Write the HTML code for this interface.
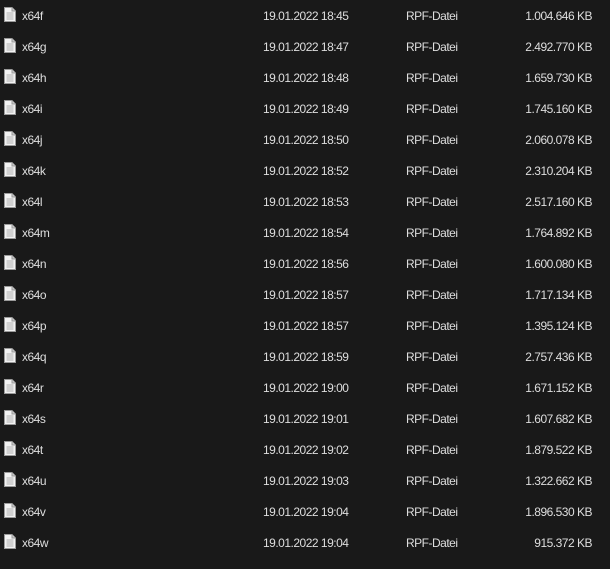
<!DOCTYPE html>
<html><head><meta charset="utf-8"><style>
body{margin:0;background:#191919;width:610px;height:569px;overflow:hidden;font-family:"Liberation Sans",sans-serif;font-size:12px;color:#dedede;letter-spacing:-0.5px}
.r{position:absolute;left:0;width:610px;height:31px}
.r svg{position:absolute;left:4px;top:7px}
.n{position:absolute;left:22px;top:9px}
.d{position:absolute;left:263px;top:9px}
.t{position:absolute;left:406px;top:9px}
.s{position:absolute;right:18px;top:9px}
</style></head><body>
<script>
const rows=[["x64f","18:45","1.004.646"],["x64g","18:47","2.492.770"],["x64h","18:48","1.659.730"],["x64i","18:49","1.745.160"],["x64j","18:50","2.060.078"],["x64k","18:52","2.310.204"],["x64l","18:53","2.517.160"],["x64m","18:54","1.764.892"],["x64n","18:56","1.600.080"],["x64o","18:57","1.717.134"],["x64p","18:57","1.395.124"],["x64q","18:59","2.757.436"],["x64r","19:00","1.671.152"],["x64s","19:01","1.607.682"],["x64t","19:02","1.879.522"],["x64u","19:03","1.322.662"],["x64v","19:04","1.896.530"],["x64w","19:04","915.372"]];
let h="";
rows.forEach((r,i)=>{h+=`<div class="r" style="top:${i*31}px"><svg width="12" height="15" viewBox="0 0 12 15"><path d="M0.5 0.5H8L11.5 4V14.5H0.5Z" fill="#f2f2f2" stroke="#9a9a9a"/><path d="M8 0.5V4H11.5" fill="#ccc" stroke="#9a9a9a"/><path d="M2.5 6H9.5M2.5 8H9.5M2.5 10H9.5M2.5 12H9.5" stroke="#b0b0b0"/></svg><span class="n">${r[0]}</span><span class="d">19.01.2022 ${r[1]}</span><span class="t">RPF-Datei</span><span class="s">${r[2]} KB</span></div>`});
document.write(h);
</script>
</body></html>
